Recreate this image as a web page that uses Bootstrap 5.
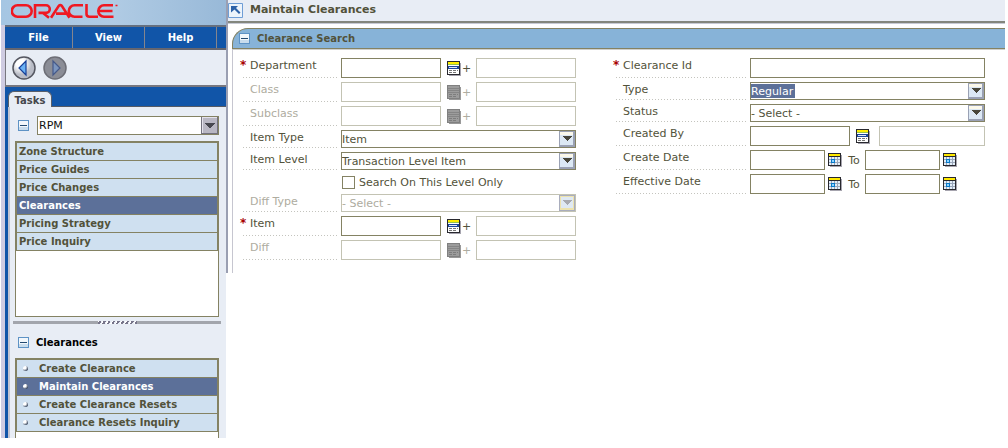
<!DOCTYPE html>
<html lang="en">
<head>
<meta charset="utf-8">
<meta name="viewport" content="width=device-width, initial-scale=1">
<title>Maintain Clearances</title>
<link href="https://cdn.jsdelivr.net/npm/bootstrap@5.3.0/dist/css/bootstrap.min.css" rel="stylesheet">
<script src="https://cdn.jsdelivr.net/npm/bootstrap@5.3.0/dist/js/bootstrap.bundle.min.js" defer></script>
<style>
:root { --olive:#848263; --olive-soft:#c3c3b3; --ink:#52523a; --panel:#e8edf5; --brand:#1155a8; --active:#5c7099; --item:#cfe0f0; }
body { font-family:"DejaVu Sans", Verdana, sans-serif; font-size:11px; line-height:14px; color:var(--ink); background:#fff; }
button { font:inherit; color:inherit; padding:0; border:0; background:none; }
svg { display:block; flex:none; }

/* side bar */
.side { flex:0 0 226px; padding-left:1px; font-size:10px; }
.logo-bar { height:25px; padding:3px 0 0 10px; background:linear-gradient(90deg,#a5c6e3,#b0cbe4 50%,#98b9d8); }
.frame { border-left:4px solid #a9a5c4; border-image:linear-gradient(90deg,#cfcce2 0 50%,#8b88a3 50%) 1; }
.menu-bar { height:25px; background:var(--brand); border-top:2px solid #66707f; border-bottom:2px solid #66666f; }
.menu-bar a { flex:0 0 72px; color:#fff; font-weight:bold; text-decoration:none; border-right:1px solid #85858d; }
.menu-bar a:first-child { flex-basis:68px; }
.tool-bar { height:37px; padding:6px 0 0 6px; gap:7px; background:var(--panel); border-left:1px solid #77777f; border-bottom:2px solid #77777f; }
.tool-bar button { height:24px; }
.tasks { background:var(--brand); padding-left:3px; }
.tabs { padding-top:4px; height:20px; border-bottom:1px solid #555a64; }
.tabs button { display:block; width:44px; height:16px; padding-top:2px; border:1px solid #5a5f69; border-bottom:0; border-radius:6px 6px 0 0; background:var(--panel); font-weight:bold; color:#44464c; }
.panel { background:var(--panel); border-left:2px solid #c2c4d2; padding:9px 7px 0 5px; }
.toggle { flex:none; width:12px; height:12px; }
.module-row { padding-left:3px; margin-bottom:6px; }
.task-box { border:1px solid var(--olive); background:#fff; }
.tall { height:176px; }
.short { height:80px; border-bottom:0; overflow:hidden; }
.task-list { border:1px solid var(--olive); border-bottom:0; margin:0; padding:0; list-style:none; }
.task-list a { display:flex; align-items:center; height:18px; padding-left:2px; color:var(--ink); font-weight:bold; text-decoration:none; background:var(--item); border-bottom:1px solid var(--olive); }
.task-list a.active { background:var(--active); color:#fff; }
.sub a { gap:11px; padding-left:6px; }
.sub i { width:5px; height:5px; border-radius:50%; background:radial-gradient(circle at 30% 30%,#fff 30%,#39465c 75%); }
.splitter { display:flex; justify-content:center; height:3px; margin:4px -2px 0; background:#a2a5ac; }
.splitter span { width:39px; background:repeating-linear-gradient(120deg,#fff 0 1px,#77758a 1px 3px,#e8edf5 3px 4px); }
.sub-head { height:34px; padding:4px 0 0 3px; gap:6px; color:#000; }

/* work area */
.work { border-left:2px solid #9a9fb2; margin-right:3px; min-width:0; }
.title-bar { height:23px; gap:7px; padding:0 0 1px; background:var(--panel); border-bottom:2px solid #83867d; box-shadow:0 1px #c7cad4; }
.title-bar h1 { margin:0; font-size:11px; line-height:14px; font-weight:bold; }
.search-panel { padding:5px 0 0 4px; }
.search-panel h2 { height:21px; margin:0; padding:1px 0 0 6px; gap:6px; background:#87b3d8; border:1px solid var(--olive); border-right:0; border-radius:16px 0 0 0; font-size:10px; font-weight:bold; line-height:14px; box-shadow:0 1px #cfd0cd; }
.search-body { border-left:1px solid #c6c6d0; padding:9px 0 13px 10px; gap:40px; }
.fields { display:grid; row-gap:4px; align-content:start; }
.field-row { display:flex; gap:4px; }
.field-row > :first-child { flex:none; padding:1px 0 0 7px; position:relative; }
.field-row > label { background:repeating-linear-gradient(90deg,#c4c4be 0 1px,transparent 1px 3px) 0 100%/100% 1px no-repeat; }
.fields-a .field-row > :first-child { width:94px; }
.fields-b .field-row > :first-child { width:130px; }
.req::before { content:"*"; position:absolute; left:-3px; top:0; color:#a80000; font-size:12px; font-weight:bold; }
.field-row.off { color:#aeaca0; }
.entry { display:flex; align-items:center; width:235px; }
.box { height:20px; min-width:0; padding:0 2px; border:1px solid var(--olive); border-radius:0; background:#fff; color:var(--ink); outline:0; }
.box:disabled { border-color:var(--olive-soft); }
.w-code { flex:0 0 100px; } .w-date { flex:0 0 75px; }
.pick { appearance:none; width:235px; height:18px; padding:1px 20px 0 0; border:1px solid var(--olive); border-radius:0; color:var(--ink); outline:0; font-size:11px; line-height:14px;
  background:#fff url("data:image/svg+xml,%3Csvg xmlns='http://www.w3.org/2000/svg' width='16' height='16' shape-rendering='crispEdges'%3E%3Cpath fill='%239aa1b4' d='M0 0h16v16H0z'/%3E%3Cpath fill='%23dce8f4' d='M1 1h13v13H1z'/%3E%3Cpath fill='%23fbf8ea' d='M1 1h13v3H1z'/%3E%3Cpath fill='%2348463a' d='M4 5h9v1h-1v1h-1v1h-1v1H9v1H8V9H7V8H6V7H5V6H4z'/%3E%3C/svg%3E") right 0 top 0/16px 16px no-repeat; }
.pick:disabled { border-color:var(--olive-soft); color:#aeaca0; opacity:1;
  background-image:url("data:image/svg+xml,%3Csvg xmlns='http://www.w3.org/2000/svg' width='16' height='16' shape-rendering='crispEdges'%3E%3Cpath fill='%23a9adbd' d='M0 0h16v16H0z'/%3E%3Cpath fill='%23ede3ae' d='M1 1h14v14H1z'/%3E%3Cpath fill='%23dfe9f3' d='M2 2h12v11H2z'/%3E%3Cpath fill='%23a8aab0' d='M4 5h9v1h-1v1h-1v1h-1v1H9v1H8V9H7V8H6V7H5V6H4z'/%3E%3C/svg%3E"); }
.pick.module { width:182px; height:19px; padding-left:1px; background-size:17px 17px; color:#111; background-image:url("data:image/svg+xml,%3Csvg xmlns='http://www.w3.org/2000/svg' width='17' height='17' shape-rendering='crispEdges'%3E%3Cpath fill='%2373717d' d='M0 0h17v17H0z'/%3E%3Cpath fill='%23e4e2ec' d='M1 0h15v16H1z'/%3E%3Cpath fill='%23b9b7c3' d='M2 1h14v15H2z'/%3E%3Cpath fill='%23484850' d='M4 6h10v1h-1v1h-1v1h-1v1h-1v1H8v-1H7V9H6V8H5V7H4z'/%3E%3C/svg%3E"); }
/* drop-down whose value is selected */
.pick.marked { color:#fff; background-image:url("data:image/svg+xml,%3Csvg xmlns='http://www.w3.org/2000/svg' width='16' height='16' shape-rendering='crispEdges'%3E%3Cpath fill='%239aa1b4' d='M0 0h16v16H0z'/%3E%3Cpath fill='%23dce8f4' d='M1 1h13v13H1z'/%3E%3Cpath fill='%23fbf8ea' d='M1 1h13v3H1z'/%3E%3Cpath fill='%2348463a' d='M4 5h9v1h-1v1h-1v1h-1v1H9v1H8V9H7V8H6V7H5V6H4z'/%3E%3C/svg%3E"), linear-gradient(var(--active),var(--active)); background-position:right 0 top 0, 0 1px; background-size:16px 16px, 44px 14px; }
.lov { margin-left:6px; padding-top:2px; }
.cal { margin-left:3px; }
.plus { width:9px; margin-right:5px; padding-top:2px; text-align:center; }
.to { width:22px; padding-top:1px; text-align:center; }
.level { height:16px; gap:4px; padding-left:1px; }
.level input { appearance:none; width:13px; height:13px; margin:0; border:1px solid var(--olive); background:#fff; }
.level label { padding-top:1px; }
</style>
</head>
<body>
<svg class="d-none" shape-rendering="crispEdges">
  <symbol id="minus" viewBox="0 0 12 12"><path fill="#5e93c5" d="M0 0h11v11H0z"/><path fill="#f2f7fb" d="M1 1h9v9H1z"/><path fill="#c8dcec" d="M1 7h9v3H1z"/><path fill="#234a70" d="M2 5h7v1H2z"/></symbol>
  <symbol id="lov" viewBox="0 0 15 16"><path fill="#a6a4ae" d="M2 2h12v13H2z"/><path fill="#28282e" d="M0 0h13v14H0z"/><path fill="#fff" d="M1 1h11v12H1z"/><path fill="#ffee00" d="M1 1h11v2H1z"/><path fill="#94c24e" d="M1 3h11v1H1z"/><path fill="#1d469a" d="M1 5h11v3H1z"/><path fill="#dce6f6" d="M2 6h8v1H2z"/><path stroke="#777" stroke-dasharray="3 1" d="M2 9.500h9M2 11.500h8"/></symbol>
  <symbol id="lov-off" viewBox="0 0 15 16"><path fill="#999" d="M2 2h12v13H2z"/><path fill="#808080" d="M0 0h13v14H0z"/><path fill="#9c9c9c" d="M1 1h11v12H1z"/><path fill="#858585" d="M1 3h11v1H1zM1 5h11v1H1zM1 7h11v1H1z"/><path stroke="#7d7d7d" stroke-dasharray="3 1" d="M2 9.500h9M2 11.500h8"/></symbol>
  <symbol id="cal" viewBox="0 0 15 15"><path fill="#a6a4ae" d="M2 2h12v12H2z"/><path fill="#28282e" d="M0 0h13v13H0z"/><path fill="#e3eef9" d="M1 4h11v8H1z"/><path fill="#ffe900" d="M1 1h11v2H1z"/><path fill="#9ba7ba" d="M3 4h1v8H3zM6 4h1v8H6zM9 4h1v8H9zM1 6h11v1H1zM1 9h11v1H1z"/><path fill="#0879c8" d="M3 6h4v4H3z"/><path fill="#8fd3ff" d="M4 7h2v2H4z"/></symbol>
</svg>

<div class="d-flex align-items-start">
  <aside class="side">
    <div class="logo-bar">
      <svg width="108" height="16" viewBox="0 0 108 16" fill="none" stroke="#f01822" stroke-width="2.600" role="img" aria-label="Oracle">
        <path d="M6.500 2.300H15a5.600 5.600 0 0 1 0 11.400H6.500a5.600 5.600 0 0 1 0-11.400zM24 15v-12.700H35a3.800 3.800 0 0 1 0 7.600H27.500M32 10l6 4.800M40 14.800l7.800-12q1.500-1.200 3 0L58.500 14.800M45 10.600h10M72 2.300H63.500a5.600 5.600 0 0 0 0 11.400H71.500M75.500 1v10q0 2.700 3 2.700H87M102 2.300H93a5.600 5.600 0 0 0 0 11.400h9.500M88.500 8h13"/><path stroke-width="1.500" d="M104.500 2.500h2"/>
      </svg>
    </div>
    <div class="frame">
      <nav class="menu-bar d-flex">
        <a href="#" class="d-flex align-items-center justify-content-center">File</a>
        <a href="#" class="d-flex align-items-center justify-content-center">View</a>
        <a href="#" class="d-flex align-items-center justify-content-center">Help</a>
      </nav>
      <div class="tool-bar d-flex">
        <button type="button" aria-label="Back"><svg width="24" height="24" viewBox="0 0 24 24"><defs><radialGradient id="rg" cx=".35" cy=".3"><stop offset=".4" stop-color="#fff"/><stop offset="1" stop-color="#b9bcc6"/></radialGradient></defs><circle cx="12" cy="12" r="11" fill="url(#rg)" stroke="#555761" stroke-width="1.500"/><path d="M14 5v14L7 12z" fill="#6bb2f5" stroke="#173f97" stroke-width="1.200"/></svg></button>
        <button type="button" aria-label="Forward" disabled><svg width="24" height="24" viewBox="0 0 24 24"><circle cx="12" cy="12" r="11" fill="#8b8d96" stroke="#6d6e76" stroke-width="1.500"/><path d="M10 5v14l7-7z" fill="#7b95be" stroke="#45598a" stroke-width="1.200"/></svg></button>
      </div>
      <div class="tasks">
        <div class="tabs"><button type="button">Tasks</button></div>
        <div class="panel">
          <div class="module-row d-flex align-items-center justify-content-between">
            <button class="toggle" type="button" aria-label="Collapse tasks"><svg width="12" height="12"><use href="#minus"/></svg></button>
            <select class="pick module" aria-label="Module"><option>RPM</option></select>
          </div>
          <div class="task-box tall">
            <ul class="task-list">
              <li><a href="#">Zone Structure</a></li>
              <li><a href="#">Price Guides</a></li>
              <li><a href="#">Price Changes</a></li>
              <li><a href="#" class="active">Clearances</a></li>
              <li><a href="#">Pricing Strategy</a></li>
              <li><a href="#">Price Inquiry</a></li>
            </ul>
          </div>
          <div class="splitter"><span></span></div>
          <div class="d-flex align-items-center sub-head">
            <button class="toggle" type="button" aria-label="Collapse clearances"><svg width="12" height="12"><use href="#minus"/></svg></button>
            <strong>Clearances</strong>
          </div>
          <div class="task-box short">
            <ul class="task-list sub">
              <li><a href="#"><i></i>Create Clearance</a></li>
              <li><a href="#" class="active"><i></i>Maintain Clearances</a></li>
              <li><a href="#"><i></i>Create Clearance Resets</a></li>
              <li><a href="#"><i></i>Clearance Resets Inquiry</a></li>
            </ul>
          </div>
        </div>
      </div>
    </div>
  </aside>

  <main class="work flex-grow-1">
    <header class="title-bar d-flex align-items-center">
      <button type="button" aria-label="Expand work area"><svg width="15" height="15" viewBox="0 0 15 15"><path fill="#edf4fb" stroke="#6f9ed6" d="M.5.500h14v14H.5z"/><path fill="#2e62a8" d="M3 3h7L8 5l4.500 4.500-1.500 1.500L6.500 6.500l-3.500 3z"/></svg></button>
      <h1>Maintain Clearances</h1>
    </header>
    <section class="search-panel">
      <h2 class="d-flex align-items-center"><button class="toggle" type="button" aria-label="Collapse search"><svg width="12" height="12"><use href="#minus"/></svg></button>Clearance Search</h2>
      <form class="search-body d-flex">
        <div class="fields fields-a">
          <div class="field-row"><label class="req" for="dept">Department</label><div class="entry"><input class="box w-code" id="dept"><button type="button" class="lov" aria-label="Find department"><svg width="15" height="16"><use href="#lov"/></svg></button><span class="plus">+</span><input class="box w-code" disabled aria-label="Department name"></div></div>
          <div class="field-row off"><label for="class">Class</label><div class="entry"><input class="box w-code" id="class" disabled><button type="button" class="lov" disabled aria-label="Find class"><svg width="15" height="16"><use href="#lov-off"/></svg></button><span class="plus">+</span><input class="box w-code" disabled aria-label="Class name"></div></div>
          <div class="field-row off"><label for="subclass">Subclass</label><div class="entry"><input class="box w-code" id="subclass" disabled><button type="button" class="lov" disabled aria-label="Find subclass"><svg width="15" height="16"><use href="#lov-off"/></svg></button><span class="plus">+</span><input class="box w-code" disabled aria-label="Subclass name"></div></div>
          <div class="field-row"><label for="itype">Item Type</label><select class="pick" id="itype"><option>Item</option></select></div>
          <div class="field-row"><label for="ilevel">Item Level</label><select class="pick" id="ilevel"><option>Transaction Level Item</option></select></div>
          <div class="field-row"><span></span><div class="level d-flex align-items-center"><input type="checkbox" id="only"><label for="only">Search On This Level Only</label></div></div>
          <div class="field-row off"><label for="dtype">Diff Type</label><select class="pick" id="dtype" disabled><option>- Select -</option></select></div>
          <div class="field-row"><label class="req" for="item">Item</label><div class="entry"><input class="box w-code" id="item"><button type="button" class="lov" aria-label="Find item"><svg width="15" height="16"><use href="#lov"/></svg></button><span class="plus">+</span><input class="box w-code" disabled aria-label="Item name"></div></div>
          <div class="field-row off"><label for="diff">Diff</label><div class="entry"><input class="box w-code" id="diff" disabled><button type="button" class="lov" disabled aria-label="Find diff"><svg width="15" height="16"><use href="#lov-off"/></svg></button><span class="plus">+</span><input class="box w-code" disabled aria-label="Diff name"></div></div>
        </div>
        <div class="fields fields-b">
          <div class="field-row"><label class="req" for="cid">Clearance Id</label><div class="entry"><input class="box w-100" id="cid"></div></div>
          <div class="field-row"><label for="type">Type</label><select class="pick marked" id="type"><option>Regular</option></select></div>
          <div class="field-row"><label for="status">Status</label><select class="pick" id="status"><option>- Select -</option></select></div>
          <div class="field-row"><label for="by">Created By</label><div class="entry"><input class="box w-code" id="by"><button type="button" class="lov" aria-label="Find user"><svg width="15" height="16"><use href="#lov"/></svg></button><input class="box flex-grow-1 ms-2" size="1" disabled aria-label="User name"></div></div>
          <div class="field-row"><label for="cd">Create Date</label><div class="entry"><input class="box w-date" id="cd"><button type="button" class="cal" aria-label="Pick create date"><svg width="15" height="15"><use href="#cal"/></svg></button><label class="to" for="cd2">To</label><input class="box w-date" id="cd2"><button type="button" class="cal" aria-label="Pick last create date"><svg width="15" height="15"><use href="#cal"/></svg></button></div></div>
          <div class="field-row"><label for="ed">Effective Date</label><div class="entry"><input class="box w-date" id="ed"><button type="button" class="cal" aria-label="Pick effective date"><svg width="15" height="15"><use href="#cal"/></svg></button><label class="to" for="ed2">To</label><input class="box w-date" id="ed2"><button type="button" class="cal" aria-label="Pick last effective date"><svg width="15" height="15"><use href="#cal"/></svg></button></div></div>
        </div>
      </form>
    </section>
  </main>
</div>
</body>
</html>
